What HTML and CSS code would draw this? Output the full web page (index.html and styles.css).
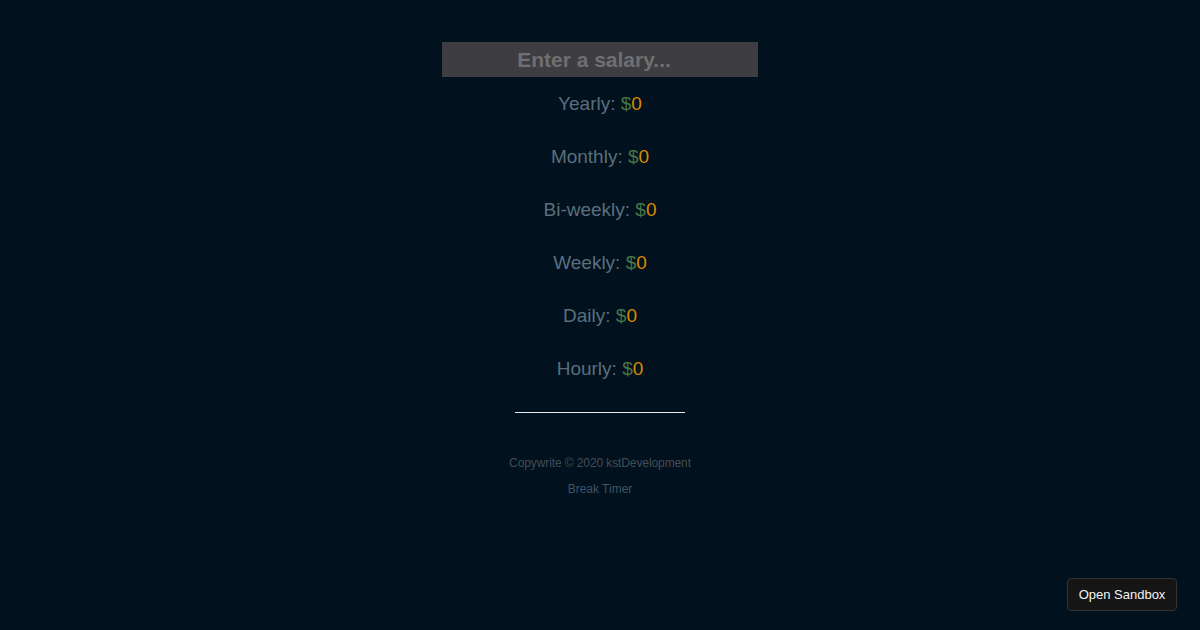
FILE: index.html
```html
<!DOCTYPE html>
<html>
<head>
<meta charset="utf-8">
<link rel="stylesheet" href="styles.css">
</head>
<body>
<main class="app">
  <input class="salary" type="text" placeholder="Enter a salary...">
  <div class="row">Yearly: <span class="dollar">$</span><span class="num">0</span></div>
  <div class="row">Monthly: <span class="dollar">$</span><span class="num">0</span></div>
  <div class="row">Bi-weekly: <span class="dollar">$</span><span class="num">0</span></div>
  <div class="row">Weekly: <span class="dollar">$</span><span class="num">0</span></div>
  <div class="row">Daily: <span class="dollar">$</span><span class="num">0</span></div>
  <div class="row">Hourly: <span class="dollar">$</span><span class="num">0</span></div>
  <div class="rule"></div>
  <footer class="footer">
    <p class="copy">Copywrite © 2020 kstDevelopment</p>
    <a class="link" href="#">Break Timer</a>
  </footer>
</main>
<button class="sandbox">Open Sandbox</button>
</body>
</html>
```
FILE: styles.css
```css
html, body {
  margin: 0;
  height: 100%;
  background: #01111d;
  font-family: "Liberation Sans", Arial, sans-serif;
  overflow: hidden;
}
.app {
  display: flex;
  flex-direction: column;
  align-items: center;
  padding-top: 42px;
}
.salary {
  width: 316px;
  height: 35px;
  box-sizing: border-box;
  border: none;
  outline: none;
  background: #3d3d42;
  color: #ccc;
  font-family: "Liberation Sans", Arial, sans-serif;
  font-weight: bold;
  font-size: 21px;
  text-align: center;
  padding: 0 12px 0 0;
}
.salary::placeholder {
  color: #6f6f6f;
}
.row {
  height: 53px;
  line-height: 54px;
  font-size: 19px;
  color: #5a6f7e;
}
.dollar { color: #4a7548; }
.num { color: #d98a00; }
.rule {
  width: 170px;
  height: 1px;
  background: #e8e8e8;
  margin-top: 17px;
}
.footer {
  display: flex;
  flex-direction: column;
  align-items: center;
  margin-top: 43px;
  font-size: 12px;
}
.copy {
  margin: 0;
  color: #444d56;
  line-height: 14px;
  letter-spacing: -0.1px;
}
.link {
  margin-top: 12px;
  color: #3f5466;
  text-decoration: none;
  line-height: 14px;
}
.sandbox {
  position: fixed;
  right: 23px;
  bottom: 19px;
  width: 110px;
  height: 33px;
  background: #151515;
  color: #f2f2f2;
  border: 1px solid #333;
  border-radius: 4px;
  font-family: "Liberation Sans", Arial, sans-serif;
  font-size: 13px;
  padding: 0;
}
```
